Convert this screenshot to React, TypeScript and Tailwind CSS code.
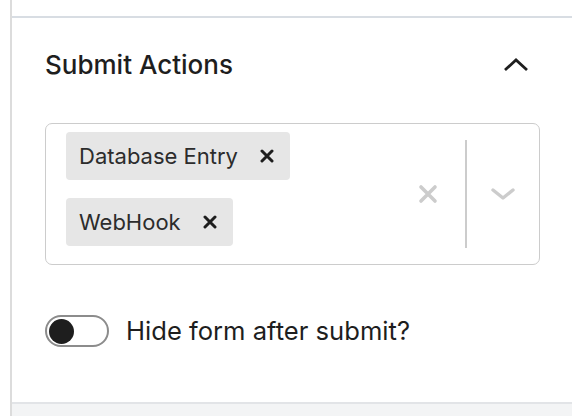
import React from "react"

const font = { fontFamily: "Inter, 'Noto Sans', sans-serif" }

function Tag({ label }: { label: string }) {
  return (
    <div className="flex h-[48px] items-center gap-[22px] rounded-[4px] bg-[#e6e6e6] pl-[13px] pr-[16px]">
      <span className="text-[22px] leading-none text-[#2c2c2c]">{label}</span>
      <svg width="14" height="14" viewBox="0 0 14 14" className="shrink-0">
        <path d="M2 2 L12 12 M12 2 L2 12" stroke="#1e1e1e" strokeWidth="3" strokeLinecap="round" />
      </svg>
    </div>
  )
}

export default function App() {
  return (
    <div className="flex h-[416px] w-[572px] overflow-hidden bg-white" style={font}>
      <div className="w-[10px] shrink-0" />
      <div className="flex flex-1 flex-col border-l-2 border-[#dcdcdc]">
        <div className="h-[18px] shrink-0 border-b-2 border-[#d8dde3]" />

        <div className="flex flex-1 flex-col pl-[33px] pr-[32px]">
          <div className="mt-[31px] flex h-[32px] items-center justify-between">
            <h2 className="text-[26px] font-medium leading-none text-[#1e1e1e]">Submit Actions</h2>
            <svg width="26" height="14" viewBox="0 0 26 14" className="mr-[11px]">
              <path d="M2 12 L13 2 L24 12" fill="none" stroke="#1e1e1e" strokeWidth="2.8" />
            </svg>
          </div>

          <div className="mt-[42px] flex h-[142px] rounded-[7px] border border-[#cccccc]">
            <div className="flex flex-1 flex-col items-start gap-[18px] pl-[20px] pt-[8px]">
              <Tag label="Database Entry" />
              <Tag label="WebHook" />
            </div>
            <div className="flex items-center">
              <div className="flex w-[74px] justify-center">
                <svg width="20" height="20" viewBox="0 0 20 20">
                  <path d="M3 3 L17 17 M17 3 L3 17" stroke="#cccccc" strokeWidth="3.6" strokeLinecap="round" />
                </svg>
              </div>
              <div className="h-[108px] w-[2px] bg-[#cccccc]" />
              <div className="flex w-[72px] justify-center">
                <svg width="26" height="14" viewBox="0 0 26 14">
                  <path d="M3 3 L13 11 L23 3" fill="none" stroke="#cccccc" strokeWidth="3.4" strokeLinecap="round" strokeLinejoin="round" />
                </svg>
              </div>
            </div>
          </div>

          <div className="mt-[50px] flex items-center gap-[17px]">
            <div className="flex h-[32px] w-[64px] items-center rounded-full border-2 border-[#8c8c8c] px-[2px]">
              <div className="h-[25px] w-[25px] rounded-full bg-[#1e1e1e]" />
            </div>
            <span className="text-[25.6px] leading-none text-[#1e1e1e]">Hide form after submit?</span>
          </div>
        </div>

        <div className="h-[14px] shrink-0 border-t-2 border-[#e2e4e7] bg-[#f3f4f5]" />
      </div>
    </div>
  )
}
